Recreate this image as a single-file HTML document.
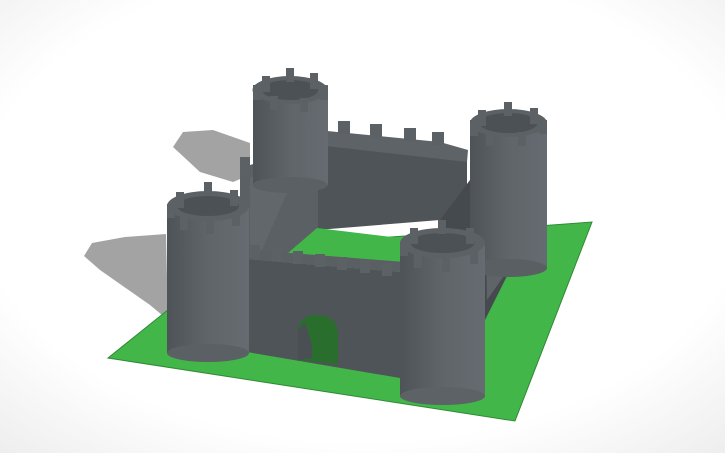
<!DOCTYPE html>
<html><head><style>
html,body{margin:0;padding:0;width:725px;height:453px;overflow:hidden;background:#fff;}
</style></head><body>
<svg width="725" height="453" viewBox="0 0 725 453" xmlns="http://www.w3.org/2000/svg">
<defs>
<radialGradient id="bg" cx="50%" cy="45%" r="75%">
<stop offset="0.7" stop-color="#ffffff"/><stop offset="1" stop-color="#ededed"/>
</radialGradient>
<linearGradient id="cyl" x1="0" x2="1" y1="0" y2="0">
<stop offset="0" stop-color="#4e5357"/><stop offset="0.5" stop-color="#5f6569"/><stop offset="1" stop-color="#656b70"/>
</linearGradient>
</defs>
<rect width="725" height="453" fill="url(#bg)"/>
<!-- shadows -->
<polygon fill="#a3a3a3" points="173,147 183,132 213,130 250,143 250,175 233,182 200,172"/>
<polygon fill="#a3a3a3" points="84,256 92,243 125,237 166,234 168,320 150,305 100,270"/>
<!-- plate -->
<polygon fill="#43b649" stroke="#2f8a35" stroke-width="1" points="108,358 245,248 592,222 515,421"/>
<!-- back wall -->
<polygon fill="#4f5458" points="317,143 467,160 467,205 440,220 317,230"/>
<polygon fill="#5d6367" points="317,130 440,142 468,150 467,162 317,145"/>
<g fill="#5b6165">
<rect x="338" y="121" width="12" height="13"/><rect x="370" y="124" width="12" height="13"/><rect x="404" y="128" width="12" height="13"/><rect x="432" y="132" width="12" height="13"/>
</g>
<!-- left wall -->
<polygon fill="#5a6064" points="240,168 300,150 318,148 318,232 293,252 240,262"/>
<polygon fill="#61676b" points="250,178 298,152 298,168 262,250 250,255"/>
<g fill="#5b6165"><rect x="240" y="157" width="10" height="18"/><rect x="255" y="140" width="10" height="18"/></g>
<!-- right wall -->
<polygon fill="#454a4e" points="440,220 470,180 512,178 515,260 485,320 440,320"/>
<polygon fill="#5e6468" points="485,195 515,178 515,260 487,300"/>
<g fill="#5b6165"><rect x="505" y="172" width="10" height="20"/><rect x="488" y="190" width="10" height="20"/></g>
<!-- courtyard -->
<polygon fill="#43b649" points="288,253 317,228 400,238 388,270"/>
<!-- back-left tower -->
<rect x="253" y="85" width="75" height="100" fill="url(#cyl)"/>
<ellipse cx="290" cy="185" rx="37.5" ry="8" fill="#5a6064"/>
<ellipse cx="290" cy="90" rx="37.5" ry="14" fill="#5b6165"/>
<ellipse cx="290" cy="90" rx="28" ry="10" fill="#4c5155"/>
<g fill="#5b6165"><rect x="262" y="76" width="8" height="16"/><rect x="286" y="68" width="8" height="14"/><rect x="310" y="73" width="8" height="16"/><rect x="270" y="96" width="8" height="14"/><rect x="300" y="98" width="8" height="14"/><rect x="320" y="86" width="8" height="14"/><rect x="253" y="86" width="8" height="14"/></g>
<!-- back-right tower -->
<rect x="470" y="120" width="77" height="148" fill="url(#cyl)"/>
<ellipse cx="508.5" cy="268" rx="38.5" ry="9" fill="#595f63"/>
<ellipse cx="508.5" cy="123" rx="38.5" ry="14" fill="#5b6165"/>
<ellipse cx="508.5" cy="123" rx="29" ry="10" fill="#4c5155"/>
<g fill="#5b6165"><rect x="478" y="110" width="8" height="16"/><rect x="504" y="102" width="8" height="14"/><rect x="530" y="108" width="8" height="16"/><rect x="486" y="132" width="8" height="14"/><rect x="518" y="132" width="8" height="14"/><rect x="539" y="120" width="8" height="14"/><rect x="470" y="122" width="8" height="14"/></g>
<!-- front wall -->
<polygon fill="#4f5458" points="235,258 400,272 400,378 235,350"/>
<polygon fill="#595f63" points="235,258 252,250 405,262 400,272"/>
<g fill="#5b6165"><rect x="250" y="245" width="10" height="13"/><rect x="272" y="248" width="10" height="13"/><rect x="293" y="251" width="10" height="13"/><rect x="315" y="254" width="10" height="13"/><rect x="337" y="257" width="10" height="13"/><rect x="360" y="260" width="10" height="13"/><rect x="382" y="263" width="10" height="13"/></g>
<path d="M298,360 L298,330 Q300,315 316,315 Q338,315 338,335 L338,364 Z" fill="#2a6e2e"/>
<polygon fill="#4a4f53" points="298,360 298,330 305,322 312,345 312,358"/>
<!-- front-left tower -->
<rect x="167" y="205" width="82" height="148" fill="url(#cyl)"/>
<ellipse cx="208" cy="353" rx="41" ry="9" fill="#5a6064"/>
<ellipse cx="208" cy="206" rx="41" ry="15" fill="#5b6165"/>
<ellipse cx="208" cy="206" rx="31" ry="10" fill="#4c5155"/>
<g fill="#5b6165"><rect x="176" y="192" width="8" height="16"/><rect x="204" y="182" width="8" height="14"/><rect x="230" y="190" width="8" height="16"/><rect x="180" y="216" width="8" height="14"/><rect x="206" y="220" width="8" height="14"/><rect x="232" y="212" width="8" height="14"/><rect x="167" y="204" width="8" height="14"/></g>
<!-- front-right tower -->
<rect x="400" y="242" width="85" height="155" fill="url(#cyl)"/>
<ellipse cx="442.5" cy="396" rx="42.5" ry="9" fill="#5c6266"/>
<ellipse cx="442.5" cy="243" rx="42.5" ry="15" fill="#5b6165"/>
<ellipse cx="442.5" cy="243" rx="32" ry="10" fill="#4c5155"/>
<g fill="#5b6165"><rect x="410" y="228" width="8" height="16"/><rect x="438" y="220" width="8" height="14"/><rect x="466" y="228" width="8" height="16"/><rect x="414" y="254" width="8" height="14"/><rect x="442" y="258" width="8" height="14"/><rect x="470" y="250" width="8" height="14"/><rect x="400" y="242" width="8" height="14"/></g>
</svg>
</body></html>
